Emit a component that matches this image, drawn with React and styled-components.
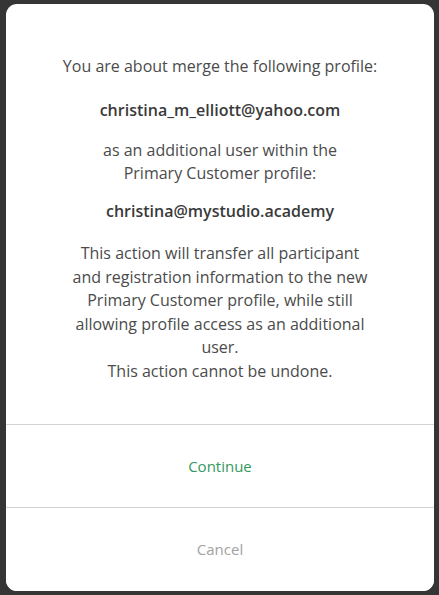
import React from "react"
import styled, { createGlobalStyle } from "styled-components"

const GlobalStyle = createGlobalStyle`
  html, body {
    margin: 0;
    padding: 0;
    background: #343434;
    font-family: "Open Sans", "Noto Sans", sans-serif;
  }
`

const Backdrop = styled.div`
  width: 439px;
  height: 595px;
  box-sizing: border-box;
  padding: 4px 5px 4px 6px;
  background: #353535;
`

const Modal = styled.div`
  height: 587px;
  background: #fff;
  border-radius: 11px;
  display: flex;
  flex-direction: column;
  overflow: hidden;
`

const Body = styled.div`
  flex: 1;
  padding: 51px 50px 0;
  display: flex;
  flex-direction: column;
  align-items: center;
  text-align: center;
`

const Text = styled.p`
  margin: 0 0 ${(p) => p.gap || 18}px;
  max-width: ${(p) => p.width || 330}px;
  font-size: 16px;
  line-height: ${(p) => p.lh || 23}px;
  color: #4b4b4b;
`

const Email = styled(Text)`
  font-weight: 600;
  color: #3a3a3a;
`

const Button = styled.button`
  flex: none;
  height: ${(p) => p.h || 83}px;
  padding: 0 0 ${(p) => p.pb || 0}px;
  border: 0;
  border-top: 1px solid #d2d2d2;
  background: #fff;
  font-family: inherit;
  font-size: 15px;
  color: ${(p) => (p.primary ? "#35985e" : "#a2a2a2")};
  cursor: pointer;
`

const App = () => {
  return (
    <Backdrop>
      <GlobalStyle />
      <Modal>
        <Body>
          <Text gap={21}>You are about merge the following profile:</Text>
          <Email gap={17}>christina_m_elliott@yahoo.com</Email>
          <Text gap={15}>
            as an additional user within the
            <br />
            Primary Customer profile:
          </Text>
          <Email gap={19}>christina@mystudio.academy</Email>
          <Text width={305} lh={23.6}>
            This action will transfer all participant and registration information to the new Primary
            Customer profile, while still allowing profile access as an additional user.
            <br />
            This action cannot be undone.
          </Text>
        </Body>
        <Button primary>Continue</Button>
        <Button h={84} pb={2}>Cancel</Button>
      </Modal>
    </Backdrop>
  )
}

export default App
